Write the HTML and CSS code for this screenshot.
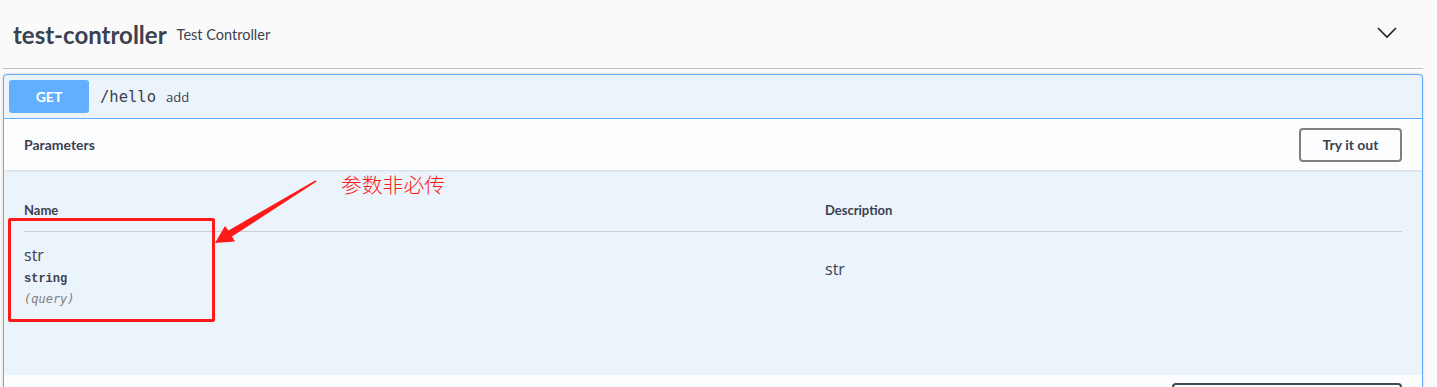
FILE: index.html
```html
<!DOCTYPE html>
<html lang="en">
<head>
    <meta charset="UTF-8">
    <title>Swagger UI - test-controller</title>
    <link rel="stylesheet" href="styles.css">
</head>
<body>
    <div class="page">
        <div class="tag">
            <h3 class="tag-title">
                <span class="tag-name">test-controller</span>
                <small class="tag-desc">Test Controller</small>
            </h3>
            <svg class="chevron" width="20" height="20" viewBox="0 0 20 20">
                <polyline points="1,5 10,14 19,5" fill="none" stroke="#222" stroke-width="1.6"/>
            </svg>
        </div>

        <div class="opblock">
            <div class="summary">
                <span class="method">GET</span>
                <span class="path">/hello</span>
                <span class="summary-desc">add</span>
            </div>

            <div class="section-header">
                <h4>Parameters</h4>
                <button class="try-out">Try it out</button>
            </div>

            <div class="params">
                <div class="params-head">
                    <div>Name</div>
                    <div>Description</div>
                </div>
                <div class="param-row">
                    <div class="param-name">
                        <div class="name">str</div>
                        <div class="type">string</div>
                        <div class="in">(query)</div>
                    </div>
                    <div class="param-desc">str</div>
                </div>
            </div>

            <div class="execute-wrapper">
                <button class="execute" aria-label="Execute"></button>
            </div>
        </div>

        <!-- annotation drawn over the screenshot -->
        <div class="note-box"></div>
        <div class="note-text">参数非必传</div>
        <svg class="note-arrow" width="1437" height="387" viewBox="0 0 1437 387">
            <polygon points="215,243 225,226 228.5,230.5 315.6,180.2 316.6,181.6 232,236.5 235,241.5" fill="#ff1a1a"/>
        </svg>
    </div>
</body>
</html>
```

FILE: styles.css
```css
:root {
    --blue: #61affe;
    --text: #3b4151;
    --red: #ff1a1a;
}

* {
    box-sizing: border-box;
}

html, body {
    margin: 0;
    padding: 0;
    overflow: hidden;
    background-color: #fafafa;
    color: var(--text);
    font-family: "Open Sans", sans-serif;
}

.page {
    position: relative;
    width: 1423px;
    padding-left: 3px;
    height: 387px;
}

.tag {
    display: flex;
    align-items: center;
    justify-content: space-between;
    height: 69px;
    padding: 0 26px 0 10px;
    border-bottom: 1px solid rgba(59, 65, 81, 0.3);
}

.tag-title {
    margin: 0;
    display: flex;
    align-items: center;
    gap: 10px;
}

.tag-name {
    font-family: Lato, sans-serif;
    font-size: 24px;
    font-weight: 700;
}

.tag-desc {
    font-family: Lato, sans-serif;
    font-size: 14.5px;
    font-weight: 400;
}

.chevron {
    margin-top: -2px;
}

.opblock {
    margin-top: 5px;
    border: 1px solid var(--blue);
    border-radius: 4px;
    background-color: #ebf3fb;
    box-shadow: 0 0 3px rgba(0, 0, 0, 0.19);
    overflow: hidden;
}

.summary {
    display: flex;
    align-items: center;
    padding: 5px;
    border-bottom: 1px solid var(--blue);
}

.method {
    width: 80px;
    height: 33px;
    line-height: 33px;
    text-align: center;
    border-radius: 3px;
    background-color: var(--blue);
    color: #fff;
    font-family: Lato, sans-serif;
    font-size: 14px;
    font-weight: 700;
}

.path {
    margin-left: 11px;
    font-family: "DejaVu Sans Mono", monospace;
    font-size: 15.5px;
}

.summary-desc {
    margin-left: 10px;
    font-size: 13px;
}

.section-header {
    display: flex;
    align-items: center;
    justify-content: space-between;
    height: 51px;
    padding: 0 20px;
    background-color: rgba(255, 255, 255, 0.8);
    box-shadow: 0 1px 2px rgba(0, 0, 0, 0.1);
}

.section-header h4 {
    margin: 0;
    font-family: Lato, sans-serif;
    font-size: 14px;
    font-weight: 700;
}

.try-out {
    width: 103px;
    height: 34px;
    border: 2px solid #808080;
    border-radius: 4px;
    background: transparent;
    color: var(--text);
    font-family: Lato, sans-serif;
    font-size: 14px;
    font-weight: 700;
}

.params {
    height: 205px;
    padding: 21px 20px 0;
}

.params-head,
.param-row {
    display: grid;
    grid-template-columns: 801px 1fr;
}

.params-head {
    padding: 11px 0 13px;
    border-bottom: 1px solid rgba(59, 65, 81, 0.2);
    font-family: Lato, sans-serif;
    font-size: 13px;
    font-weight: 700;
}

.param-row {
    padding-top: 13px;
}

.param-name .name {
    font-size: 16px;
    line-height: 20px;
}

.param-name .type {
    margin-top: 4px;
    font-family: "Liberation Mono", monospace;
    font-size: 12px;
    font-weight: 700;
    line-height: 20px;
}

.param-name .in {
    font-family: "DejaVu Sans Mono", monospace;
    font-size: 12px;
    font-style: italic;
    color: #808080;
    line-height: 20px;
}

.param-desc {
    padding-top: 14px;
    font-size: 16px;
    line-height: 20px;
}

.execute-wrapper {
    display: flex;
    justify-content: flex-end;
    padding: 8px 20px 20px;
    background-color: rgba(255, 255, 255, 0.8);
}

.execute {
    width: 230px;
    height: 40px;
    border: 2px solid #444654;
    border-radius: 4px;
    background: #fff;
}

.note-box {
    position: absolute;
    left: 8px;
    top: 218px;
    width: 207px;
    height: 104px;
    border: 3px solid var(--red);
    border-radius: 2px;
}

.note-text {
    position: absolute;
    left: 341px;
    top: 171px;
    color: var(--red);
    font-family: "Noto Sans CJK SC", sans-serif;
    font-size: 20.8px;
    font-weight: 300;
    line-height: 26px;
}

.note-arrow {
    position: absolute;
    left: 0;
    top: 0;
    pointer-events: none;
}
```
